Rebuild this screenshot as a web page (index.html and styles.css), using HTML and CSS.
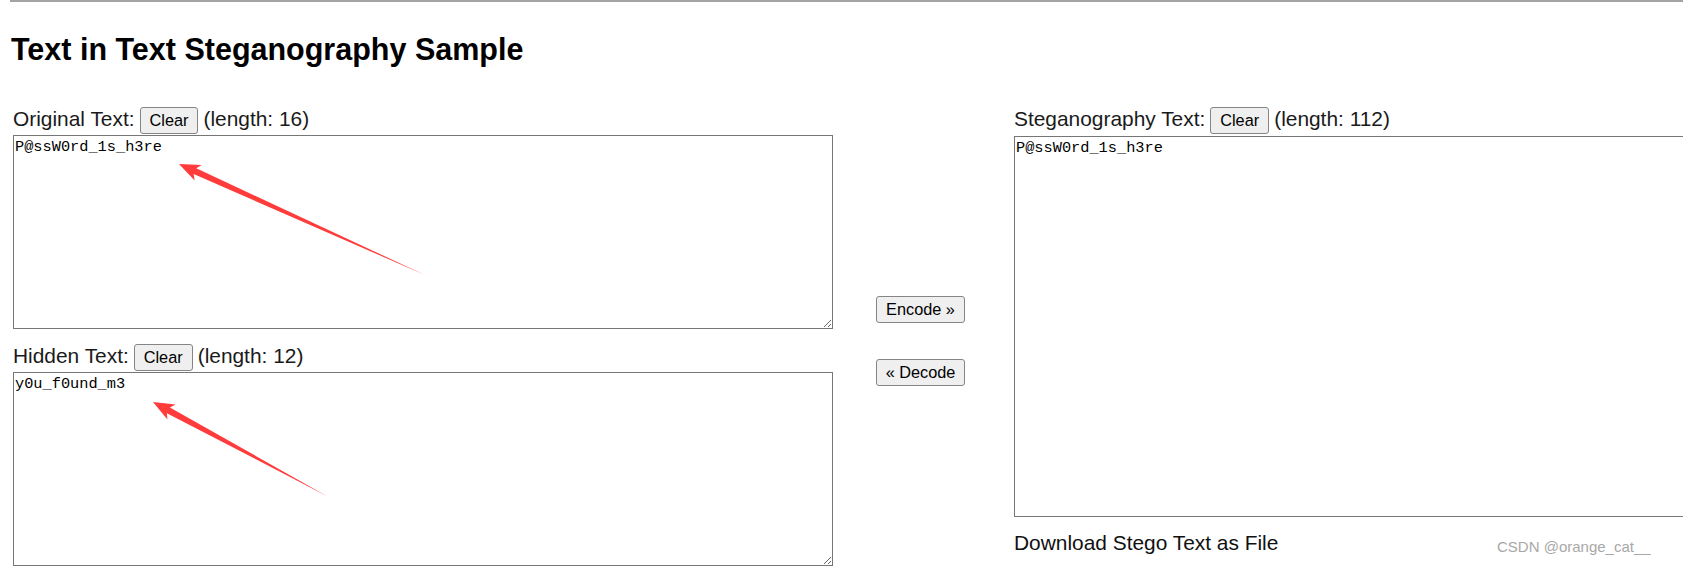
FILE: index.html
```html
<!DOCTYPE html>
<html>
<head>
<meta charset="utf-8">
<title>Text in Text Steganography Sample</title>
<link rel="stylesheet" href="styles.css">
</head>
<body>
<div class="page">
  <div class="topline"></div>
  <h2 class="title">Text in Text Steganography Sample</h2>
  <div class="layout">
    <div class="col-left">
      <div class="label-row">
        <span class="label">Original Text:</span>
        <button class="btn">Clear</button>
        <span class="label">(length: 16)</span>
      </div>
      <textarea class="ta ta-left">P@ssW0rd_1s_h3re</textarea>
      <div class="label-row label-row-second">
        <span class="label">Hidden Text:</span>
        <button class="btn">Clear</button>
        <span class="label">(length: 12)</span>
      </div>
      <textarea class="ta ta-left">y0u_f0und_m3</textarea>
    </div>
    <div class="col-mid">
      <button class="btn btn-action">Encode »</button>
      <button class="btn btn-action btn-decode">« Decode</button>
    </div>
    <div class="col-right">
      <div class="label-row">
        <span class="label">Steganography Text:</span>
        <button class="btn">Clear</button>
        <span class="label">(length: 112)</span>
      </div>
      <textarea class="ta ta-right">P@ssW0rd_1s_h3re</textarea>
      <div class="download">Download Stego Text as File</div>
    </div>
  </div>
</div>
<svg class="arrows" width="1683" height="568" viewBox="0 0 1683 568">
  <g transform="translate(179 164) rotate(24.3)">
    <polygon class="arrow" points="0,0 21,-8.5 17.5,-3.2 270,0 17.5,3.2 21,8.5"/>
  </g>
  <g transform="translate(153 402) rotate(28.4)">
    <polygon class="arrow" points="0,0 21,-8.5 17.5,-3.2 198,0 17.5,3.2 21,8.5"/>
  </g>
</svg>
<div class="watermark">CSDN @orange_cat__</div>
</body>
</html>
```

FILE: styles.css
```css
html, body {
  margin: 0;
  padding: 0;
  background: #ffffff;
  overflow: hidden;
  width: 1683px;
  height: 568px;
}

body {
  position: relative;
  font-family: "Liberation Sans", Arial, sans-serif;
  color: #111;
}

.page {
  padding-left: 10px;
}

.topline {
  height: 2px;
  background: #a3a3a3;
}

.title {
  margin: 29px 0 0 1px;
  font-family: "Liberation Sans", Arial, sans-serif;
  font-weight: bold;
  font-size: 30.5px;
  line-height: 36px;
  color: #000;
  white-space: nowrap;
}

.layout {
  display: flex;
  margin-top: 40px;
  padding-left: 3px;
}

.col-left {
  flex: 0 0 820px;
  width: 820px;
  display: flex;
  flex-direction: column;
}

.col-mid {
  flex: 0 0 181px;
  width: 181px;
  display: flex;
  flex-direction: column;
  align-items: center;
  padding-top: 189px;
  padding-right: 6px;
  box-sizing: border-box;
}

.col-right {
  flex: 1 1 auto;
  min-width: 0;
  display: flex;
  flex-direction: column;
  overflow: hidden;
}

.label-row {
  display: flex;
  align-items: baseline;
  gap: 5px;
  height: 28px;
  white-space: nowrap;
}

.label-row-second {
  margin-top: 15px;
}

.label {
  font-size: 20.9px;
  color: #1a1a1a;
}

.btn {
  font-family: "Liberation Sans", Arial, sans-serif;
  font-size: 16.3px;
  height: 27px;
  padding: 0 9px;
  margin: 0;
  background: #efefef;
  border: 1px solid #858585;
  border-radius: 3px;
  color: #000;
  white-space: nowrap;
}

.btn-action {
  height: 27px;
}

.btn-decode {
  margin-top: 36px;
}

.ta {
  box-sizing: border-box;
  margin: 0;
  border: 1px solid #767676;
  border-radius: 0;
  padding: 2px 1px;
  font-family: "Liberation Mono", "DejaVu Sans Mono", monospace;
  font-size: 15.3px;
  line-height: 18px;
  color: #000;
  background: #fff;
  outline: none;
}

.ta-left {
  width: 820px;
  height: 194px;
}

.col-right .ta-right {
  width: 100%;
  height: 381px;
  margin-top: 1px;
  border-right: none;
  resize: none;
}

.download {
  margin-top: 14px;
  font-size: 20.9px;
  line-height: 23px;
  color: #111;
  white-space: nowrap;
}

.arrows {
  position: absolute;
  left: 0;
  top: 0;
  pointer-events: none;
}

.arrow {
  fill: #ff3b3b;
}

.watermark {
  position: absolute;
  left: 1497px;
  top: 538px;
  font-family: "Liberation Sans", Arial, sans-serif;
  font-size: 15px;
  color: #a8a8a8;
}
```
